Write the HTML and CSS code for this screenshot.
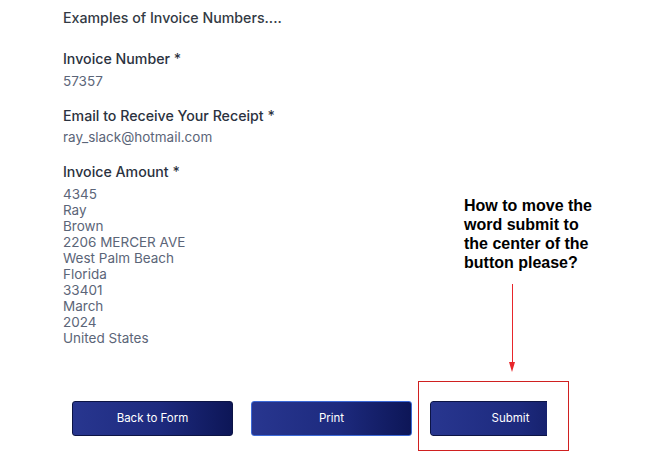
FILE: index.html
```html
<!DOCTYPE html>
<html lang="en">
<head>
<meta charset="utf-8">
<title>Invoice Confirmation</title>
<link rel="stylesheet" href="styles.css">
</head>
<body>
<div class="page">
  <main class="content">
    <h2 class="intro">Examples of Invoice Numbers....</h2>
    <div class="field">
      <div class="label">Invoice Number *</div>
      <div class="value">57357</div>
    </div>
    <div class="field">
      <div class="label">Email to Receive Your Receipt *</div>
      <div class="value">ray_slack@hotmail.com</div>
    </div>
    <div class="field">
      <div class="label">Invoice Amount *</div>
      <div class="value">4345<br>Ray<br>Brown<br>2206 MERCER AVE<br>West Palm Beach<br>Florida<br>33401<br>March<br>2024<br>United States</div>
    </div>
  </main>
  <div class="actions">
    <button class="btn btn-back">Back to Form</button>
    <button class="btn btn-print">Print</button>
    <div class="clip"><button class="btn btn-submit">Submit</button></div>
  </div>
  <div class="note">How to move the<br>word submit to<br>the center of the<br>button please?</div>
  <div class="arrow"></div>
  <div class="highlight"></div>
</div>
</body>
</html>
```
FILE: styles.css
```css
* { box-sizing: border-box; }
html, body { margin: 0; padding: 0; background: #fff; }
.page {
  position: relative;
  width: 647px;
  height: 463px;
  overflow: hidden;
  font-family: Inter, "Noto Sans", sans-serif;
}
.content {
  padding: 8px 0 0 63px;
}
.intro {
  margin: 0 0 21px;
  font-size: 14.2px;
  line-height: 20px;
  font-weight: 500;
  color: #333a44;
}
.field { margin-bottom: 17px; }
.label {
  font-size: 14.2px;
  line-height: 20px;
  font-weight: 500;
  color: #2b3240;
  margin-bottom: 3.5px;
}
.value {
  font-size: 13.5px;
  line-height: 16px;
  color: #5b6578;
}
.actions {
  display: flex;
  gap: 18px;
  padding: 38px 0 0 72px;
}
.btn {
  width: 161px;
  height: 35px;
  border-radius: 3px;
  border: 1px solid #0c1445;
  background: linear-gradient(90deg, #28368f 0%, #1d2a7e 55%, #0d1657 100%);
  color: #fff;
  font-family: Inter, "Noto Sans", sans-serif;
  font-size: 11.5px;
  text-align: center;
  padding: 0;
}
.btn-print { border-color: #3d6ad6; }
.clip {
  width: 117px;
  height: 35px;
  overflow: hidden;
  border-radius: 3px 0 0 3px;
}
.note {
  position: absolute;
  left: 464px;
  top: 196px;
  font-family: "Liberation Sans", Arial, sans-serif;
  font-weight: bold;
  font-size: 16px;
  line-height: 19px;
  color: #000;
}
.arrow {
  position: absolute;
  left: 512px;
  top: 284px;
  width: 1px;
  height: 80px;
  background: #e8262b;
}
.arrow::after {
  content: "";
  position: absolute;
  left: -3px;
  top: 78px;
  border-left: 3.5px solid transparent;
  border-right: 3.5px solid transparent;
  border-top: 10px solid #e8262b;
}
.highlight {
  position: absolute;
  left: 418px;
  top: 381px;
  width: 151px;
  height: 70px;
  border: 1px solid #d02020;
}
```
